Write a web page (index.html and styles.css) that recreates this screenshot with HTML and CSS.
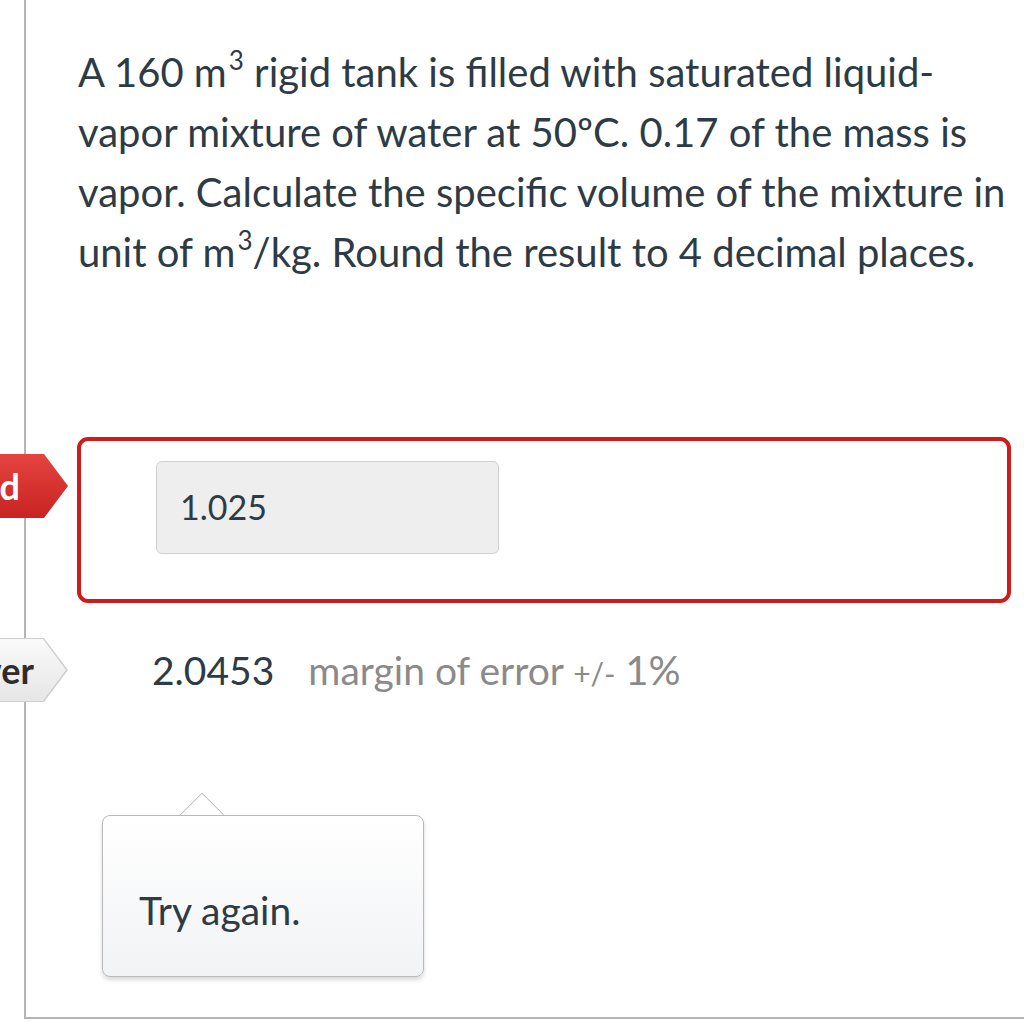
FILE: index.html
```html
<!DOCTYPE html>
<html>
<head>
<meta charset="utf-8">
<link rel="stylesheet" href="styles.css">
</head>
<body>
<div class="quiz">
  <p class="question-text">A 160 m<sup>3</sup> rigid tank is filled with saturated liquid-vapor mixture of water at 50ºC. 0.17 of the mass is vapor. Calculate the specific volume of the mixture in unit of m<sup>3</sup>/kg. Round the result to 4 decimal places.</p>
  <div class="answers">
    <div class="answer answer-wrong">
      <span class="tag tag-red"><span class="tag-text">You Answered</span></span>
      <div class="answer-box">
        <div class="answer-input">1.025</div>
      </div>
    </div>
    <div class="answer answer-correct">
      <span class="tag tag-gray"><span class="tag-text">Correct Answer</span></span>
      <div class="answer-row">
        <span class="exact">2.0453</span>
        <span class="margin">margin of error <span class="pm">+/-</span> <span class="pct">1%</span></span>
      </div>
    </div>
    <div class="feedback">
      <div class="feedback-text">Try again.</div>
    </div>
  </div>
</div>
</body>
</html>
```

FILE: styles.css
```css
html, body {
  margin: 0;
  padding: 0;
  background: #fff;
}
body {
  font-family: Lato, "Noto Sans", sans-serif;
  color: #2d3b45;
  width: 1024px;
  height: 1022px;
  overflow: hidden;
}
.quiz {
  margin-left: 24px;
  width: 1100px;
  height: 1019px;
  box-sizing: border-box;
  border-left: 2px solid #b4b4b4;
  border-bottom: 2px solid #b4b4b4;
  position: relative;
}
.question-text {
  margin: 0;
  padding: 42px 0 0 52px;
  width: 930px;
  font-size: 40px;
  line-height: 60px;
}
.question-text sup {
  font-size: 26px;
  line-height: 0;
  vertical-align: 17px;
  margin-left: 2px;
}
.answers {
  margin-top: 155px;
  padding-left: 51px;
}
.answer {
  position: relative;
}
.answer-box {
  width: 934px;
  box-sizing: border-box;
  border: 4px solid #d01b1b;
  border-radius: 11px;
  padding: 20px 0 45px 75px;
}
.answer-input {
  width: 343px;
  height: 93px;
  box-sizing: border-box;
  background: #eeeeee;
  border: 1px solid #cfcfcf;
  border-radius: 6px;
  font-size: 34px;
  line-height: 89px;
  padding-left: 23px;
}
.tag {
  position: absolute;
  left: -77px;
  width: 68px;
  height: 64px;
  overflow: hidden;
}
.tag-red {
  top: 17px;
}
.tag-red::before {
  content: "";
  position: absolute;
  inset: 0;
  background: linear-gradient(#e5443f, #c82421);
  clip-path: polygon(0 0, 44px 0, 68px 50%, 44px 100%, 0 100%);
}
.tag-gray {
  top: 0;
}
.tag-gray::before {
  content: "";
  position: absolute;
  inset: 0;
  background: #cfcfcf;
  clip-path: polygon(0 0, 44px 0, 68px 50%, 44px 100%, 0 100%);
}
.tag-gray::after {
  content: "";
  position: absolute;
  inset: 1px 0 1px 0;
  background: linear-gradient(#fafafa, #e6e6e6);
  clip-path: polygon(0 0, 43px 0, 66px 50%, 43px 100%, 0 100%);
}
.tag-text {
  position: absolute;
  top: 0;
  line-height: 64px;
  font-size: 36px;
  font-weight: 700;
  white-space: nowrap;
  z-index: 1;
}
.tag-red .tag-text {
  color: #fff;
  right: 48px;
}
.tag-gray .tag-text {
  color: #2d2d2d;
  right: 34px;
}
.answer-correct {
  margin-top: 35px;
}
.answer-row {
  height: 64px;
  padding-left: 75px;
  display: flex;
  align-items: center;
  font-size: 39px;
  white-space: nowrap;
}
.exact {
  margin-right: 34px;
}
.margin {
  color: #8a8a8a;
}
.pm {
  font-size: 30px;
}
.pct {
  font-size: 40px;
}
.feedback {
  position: relative;
  margin: 113px 0 0 25px;
  width: 322px;
  height: 162px;
  box-sizing: border-box;
  border: 1px solid #b9b9b9;
  border-radius: 8px;
  background: linear-gradient(#ffffff, #f2f3f5);
  box-shadow: 0 3px 4px rgba(0, 0, 0, 0.15);
  display: flex;
  align-items: center;
  padding-left: 36px;
  padding-top: 28px;
}
.feedback::before {
  content: "";
  position: absolute;
  left: 83px;
  top: -17px;
  width: 31px;
  height: 31px;
  background: #fff;
  border-left: 1px solid #b9b9b9;
  border-top: 1px solid #b9b9b9;
  transform: rotate(45deg);
  clip-path: polygon(0 0, 100% 0, 0 100%);
}
.feedback-text {
  font-size: 39px;
}
```
